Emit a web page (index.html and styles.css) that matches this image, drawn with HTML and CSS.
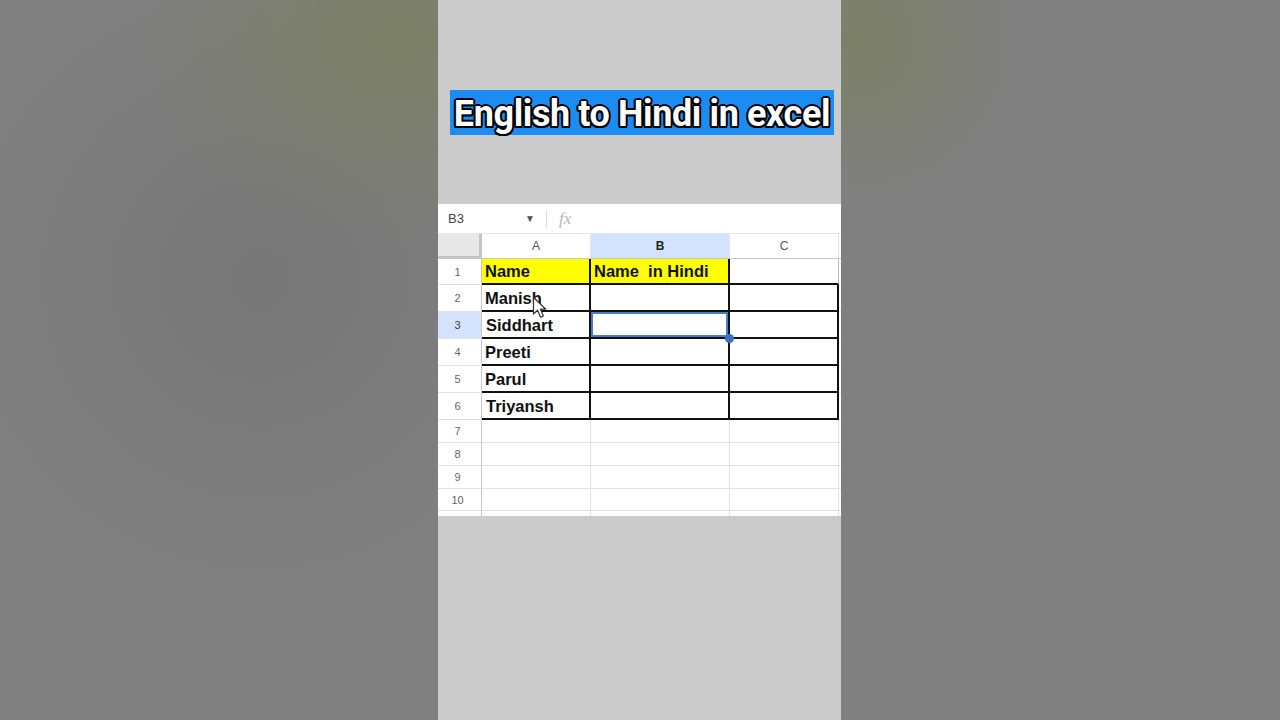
FILE: index.html
```html
<!DOCTYPE html>
<html>
<head>
<meta charset="utf-8">
<link rel="stylesheet" href="styles.css">
</head>
<body>
<div class="stage">
  <div class="side side-left"></div>
  <div class="center">
    <div class="title-area">
      <div class="banner"><span class="banner-text">English to Hindi in excel</span></div>
    </div>
    <div class="sheet">
      <div class="formula-bar">
        <span class="cell-ref">B3</span>
        <span class="ref-caret">&#9660;</span>
        <span class="fb-sep"></span>
        <span class="fx">fx</span>
      </div>
      <div class="row head-row">
        <div class="rh corner"></div>
        <div class="ch col-a">A</div>
        <div class="ch col-b sel-head">B</div>
        <div class="ch col-c">C</div>
        <div class="ch col-rest"></div>
      </div>
      <div class="row r-h26">
        <div class="rh">1</div>
        <div class="c col-a yellow bb br"><span>Name</span></div>
        <div class="c col-b yellow bb br"><span>Name&nbsp; in Hindi</span></div>
        <div class="c col-c bb brg"></div>
        <div class="c col-rest"></div>
      </div>
      <div class="row r-h27">
        <div class="rh">2</div>
        <div class="c col-a bb br"><span>Manish</span></div>
        <div class="c col-b bb br"></div>
        <div class="c col-c bb br"></div>
        <div class="c col-rest"></div>
      </div>
      <div class="row r-h27">
        <div class="rh sel-head">3</div>
        <div class="c col-a bb br"><span class="ind">Siddhart</span></div>
        <div class="c col-b bb br selected"><i class="handle"></i></div>
        <div class="c col-c bb br"></div>
        <div class="c col-rest"></div>
      </div>
      <div class="row r-h27">
        <div class="rh">4</div>
        <div class="c col-a bb br"><span>Preeti</span></div>
        <div class="c col-b bb br"></div>
        <div class="c col-c bb br"></div>
        <div class="c col-rest"></div>
      </div>
      <div class="row r-h27">
        <div class="rh">5</div>
        <div class="c col-a bb br"><span>Parul</span></div>
        <div class="c col-b bb br"></div>
        <div class="c col-c bb br"></div>
        <div class="c col-rest"></div>
      </div>
      <div class="row r-h27">
        <div class="rh">6</div>
        <div class="c col-a bb br"><span class="ind">Triyansh</span></div>
        <div class="c col-b bb br"></div>
        <div class="c col-c bb br"></div>
        <div class="c col-rest"></div>
      </div>
      <div class="row r-h23">
        <div class="rh">7</div>
        <div class="c col-a"></div>
        <div class="c col-b"></div>
        <div class="c col-c"></div>
        <div class="c col-rest"></div>
      </div>
      <div class="row r-h23">
        <div class="rh">8</div>
        <div class="c col-a"></div>
        <div class="c col-b"></div>
        <div class="c col-c"></div>
        <div class="c col-rest"></div>
      </div>
      <div class="row r-h23">
        <div class="rh">9</div>
        <div class="c col-a"></div>
        <div class="c col-b"></div>
        <div class="c col-c"></div>
        <div class="c col-rest"></div>
      </div>
      <div class="row r-h22">
        <div class="rh">10</div>
        <div class="c col-a"></div>
        <div class="c col-b"></div>
        <div class="c col-c"></div>
        <div class="c col-rest"></div>
      </div>
      <div class="row r-h4">
        <div class="rh"></div>
        <div class="c col-a"></div>
        <div class="c col-b"></div>
        <div class="c col-c"></div>
        <div class="c col-rest"></div>
      </div>
      <svg class="cursor" width="16" height="24" viewBox="0 0 16 24">
        <path d="M1.5 1.5 L1.5 18 L5.5 14.2 L8.6 21.2 L11.4 20 L8.4 13.2 L13.8 13.2 Z" fill="#ffffff" stroke="#333333" stroke-width="1.2" stroke-linejoin="round"/>
      </svg>
    </div>
    <div class="bottom-area"></div>
  </div>
  <div class="side side-right"></div>
</div>
</body>
</html>
```

FILE: styles.css
```css
* { box-sizing: border-box; }
html, body { margin: 0; padding: 0; }
body {
  width: 1280px;
  height: 720px;
  overflow: hidden;
  font-family: "Liberation Sans", Arial, sans-serif;
  background: #808080;
}
.stage {
  display: flex;
  width: 1280px;
  height: 720px;
}
.side { height: 720px; }
.side-left {
  width: 438px;
  background:
    radial-gradient(ellipse 260px 200px at 400px 40px, rgba(124,128,100,0.95), rgba(124,128,100,0) 100%),
    radial-gradient(ellipse 300px 300px at 260px 280px, rgba(116,116,116,0.8), rgba(116,116,116,0) 100%),
    #808080;
}
.side-right {
  width: 439px;
  background:
    radial-gradient(ellipse 160px 160px at 20px 40px, rgba(124,128,100,0.9), rgba(124,128,100,0) 100%),
    #808080;
}
.center {
  width: 403px;
  height: 720px;
  background: #cbcbcb;
  display: flex;
  flex-direction: column;
}
.title-area {
  height: 204px;
  padding: 90px 7px 0 12px;
}
.banner {
  width: 384px;
  height: 45px;
  background: #1b8cf2;
  display: flex;
  align-items: center;
  justify-content: center;
  overflow: visible;
}
.banner-text {
  font-family: Roboto, "Liberation Sans", sans-serif;
  font-weight: 700;
  font-size: 36px;
  line-height: 1;
  color: #ffffff;
  white-space: nowrap;
  letter-spacing: -0.4px;
  position: relative;
  top: 1px;
  text-shadow:
    2px 0 0 #000, -2px 0 0 #000, 0 2px 0 #000, 0 -2px 0 #000,
    1.5px 1.5px 0 #000, -1.5px 1.5px 0 #000, 1.5px -1.5px 0 #000, -1.5px -1.5px 0 #000;
}
.sheet {
  height: 312px;
  background: #ffffff;
  position: relative;
  overflow: hidden;
}
.formula-bar {
  height: 30px;
  display: flex;
  align-items: center;
  border-bottom: 1px solid #e6e6e6;
  color: #3c4043;
  font-size: 13px;
}
.cell-ref {
  margin-left: 10px;
  width: 77px;
  color: #444;
}
.ref-caret {
  font-size: 10px;
  color: #555;
  width: 21px;
}
.fb-sep {
  width: 1px;
  height: 18px;
  background: #dadce0;
  margin-right: 12px;
}
.fx {
  font-family: "Liberation Serif", serif;
  font-style: italic;
  font-size: 17px;
  color: #b8b8b8;
}
.row {
  display: flex;
}
.head-row { height: 25px; }
.r-h26 { height: 26px; }
.r-h27 { height: 27px; }
.r-h23 { height: 23px; }
.r-h22 { height: 22px; }
.r-h4 { height: 6px; }
.rh {
  width: 44px;
  flex: none;
  border-right: 1px solid #c8c8c8;
  border-bottom: 1px solid #e2e2e2;
  background: #ffffff;
  color: #666;
  font-size: 11px;
  display: flex;
  align-items: center;
  justify-content: center;
  padding-right: 4px;
}
.corner {
  background: #e8e8e8;
  border-right: 3px solid #c4c4c4;
  border-bottom: 3px solid #c4c4c4;
}
.ch {
  flex: none;
  border-right: 1px solid #e2e2e2;
  border-bottom: 1px solid #c8c8c8;
  background: #ffffff;
  color: #555;
  font-size: 12px;
  display: flex;
  align-items: center;
  justify-content: center;
}
.col-a { width: 109px; }
.col-b { width: 139px; }
.col-c { width: 109px; }
.col-rest { width: 2px; flex: none; border-right: none !important; }
.sel-head { background: #d3e3fd; color: #222; font-weight: 700; }
.rh.sel-head { font-weight: 400; color: #444; }
.c {
  flex: none;
  position: relative;
  border-right: 1px solid #e2e2e2;
  border-bottom: 1px solid #e2e2e2;
  font-size: 16.5px;
  font-weight: 700;
  color: #111;
  display: flex;
  align-items: center;
  padding-left: 3px;
  padding-top: 1px;
}
.c span { white-space: nowrap; }
.c .ind { margin-left: 1px; }
.yellow { background: #ffff00; }
.bb { border-bottom: 2px solid #111; }
.br { border-right: 2px solid #111; }
.brg { border-right: 1px solid #bbb; }
.selected {
  box-shadow: inset 0 0 0 2px #4a7ccc;
}
.handle {
  position: absolute;
  right: -6px;
  bottom: -6px;
  width: 9px;
  height: 9px;
  border-radius: 50%;
  background: #3b6fc0;
  z-index: 3;
}
.cursor {
  position: absolute;
  top: 92px;
  left: 94px;
  z-index: 5;
}
.bottom-area {
  flex: 1;
  background: #cbcbcb;
}
```
